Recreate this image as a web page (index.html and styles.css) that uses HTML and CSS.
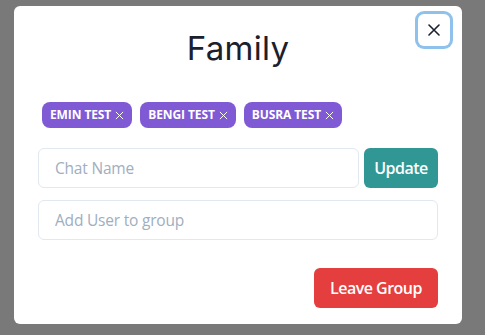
FILE: index.html
```html
<!DOCTYPE html>
<html>
<head>
<meta charset="utf-8">
<link rel="stylesheet" href="styles.css">
</head>
<body>
<div class="overlay">
  <div class="modal">
    <header class="modal-header">Family</header>
    <button class="close-btn" aria-label="Close">
      <svg width="12" height="12" viewBox="0 0 12 12"><path d="M1 1L11 11M11 1L1 11" stroke="#1a202c" stroke-width="1.6" stroke-linecap="round"/></svg>
    </button>
    <div class="modal-body">
      <div class="badges">
        <span class="badge">EMIN TEST<svg class="bx" viewBox="0 0 10 10"><path d="M1 1L9 9M9 1L1 9" stroke="#fff" stroke-width="1.1"/></svg></span>
        <span class="badge">BENGI TEST<svg class="bx" viewBox="0 0 10 10"><path d="M1 1L9 9M9 1L1 9" stroke="#fff" stroke-width="1.1"/></svg></span>
        <span class="badge">BUSRA TEST<svg class="bx" viewBox="0 0 10 10"><path d="M1 1L9 9M9 1L1 9" stroke="#fff" stroke-width="1.1"/></svg></span>
      </div>
      <div class="row">
        <input class="input" placeholder="Chat Name">
        <button class="btn teal">Update</button>
      </div>
      <input class="input full" placeholder="Add User to group">
    </div>
    <footer class="modal-footer">
      <button class="btn red">Leave Group</button>
    </footer>
  </div>
</div>
</body>
</html>
```
FILE: styles.css
```css
* { box-sizing: border-box; }
html, body { margin: 0; padding: 0; }
body {
  width: 485px;
  height: 335px;
  background: #797979;
  font-family: "Open Sans", "Noto Sans", sans-serif;
  overflow: hidden;
}
.overlay {
  padding: 6px 0 0 14px;
}
.modal {
  position: relative;
  width: 448px;
  background: #fff;
  border-radius: 6px;
}
.modal-header {
  padding: 16px 24px;
  text-align: center;
  font-family: "Inter", sans-serif;
  font-weight: 400;
  font-size: 33px;
  line-height: 52px;
  letter-spacing: 0.3px;
  color: #1a202c;
}
.close-btn {
  position: absolute;
  top: 8px;
  right: 12px;
  width: 32px;
  height: 32px;
  border: none;
  background: #fff;
  border-radius: 6px;
  box-shadow: 0 0 0 3px rgba(66, 153, 225, 0.6);
  display: flex;
  align-items: center;
  justify-content: center;
  padding: 0;
}
.modal-body {
  padding: 8px 24px;
}
.badges {
  display: flex;
  flex-wrap: wrap;
  padding-bottom: 12px;
}
.badge {
  display: inline-flex;
  align-items: center;
  margin: 4px 4px 8px 4px;
  padding: 4px 8px;
  background: #805ad5;
  color: #fff;
  border-radius: 8px;
  font-size: 12px;
  font-weight: 700;
  line-height: 18px;
  letter-spacing: -0.1px;
}
.bx {
  width: 9px;
  height: 9px;
  margin-left: 4px;
}
.row {
  display: flex;
  gap: 5px;
  margin-bottom: 12px;
}
.input {
  height: 40px;
  border: 1px solid #e2e8f0;
  border-radius: 6px;
  padding: 0 16px;
  font-family: inherit;
  font-size: 15.5px;
  letter-spacing: -0.2px;
  color: #1a202c;
  outline: none;
  flex: 1;
  min-width: 0;
}
.input::placeholder { color: #a0aec0; }
.input.full {
  width: 100%;
  display: block;
  margin-bottom: 4px;
}
.btn {
  height: 40px;
  border: none;
  border-radius: 6px;
  color: #fff;
  font-family: inherit;
  font-size: 16px;
  font-weight: 600;
  letter-spacing: -0.5px;
  padding: 0 16px;
}
.teal {
  background: #319795;
  width: 74px;
  padding: 0;
}
.red {
  background: #e53e3e;
}
.modal-footer {
  display: flex;
  justify-content: flex-end;
  padding: 16px 24px;
}
```
